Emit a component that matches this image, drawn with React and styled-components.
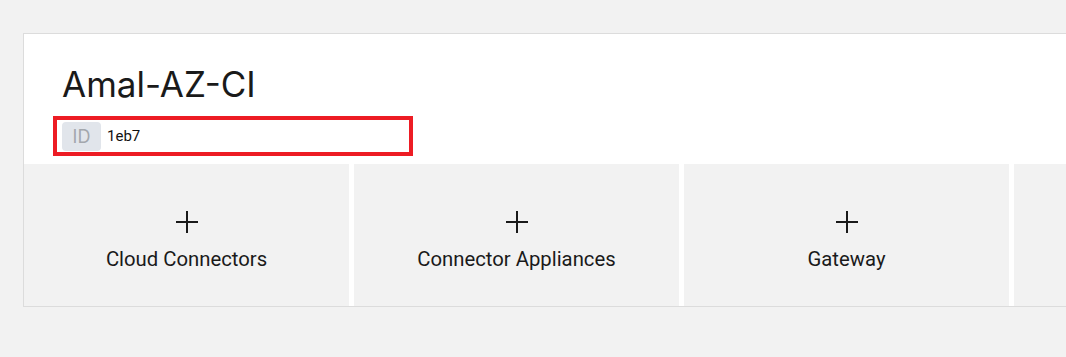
import React from "react";
import styled, { createGlobalStyle } from "styled-components";

const GlobalStyle = createGlobalStyle`
  html, body {
    margin: 0;
    padding: 0;
    background: #f2f2f2;
    overflow: hidden;
    font-family: Roboto, "Liberation Sans", sans-serif;
  }
`;

const Page = styled.div`
  width: 1066px;
  height: 357px;
  overflow: hidden;
  padding: 33px 0 0 23px;
  box-sizing: border-box;
`;

const Card = styled.section`
  width: 1680px;
  background: #fff;
  border: 1px solid #dcdcdc;
`;

const Header = styled.div`
  padding: 28px 0 8px 29px;
`;

const Title = styled.h1`
  margin: 0 0 0 9px;
  font-family: Inter, "Noto Sans", sans-serif;
  font-weight: 400;
  font-size: 35px;
  line-height: 44px;
  color: #1a1a1a;
`;

const IdBox = styled.div`
  display: flex;
  align-items: center;
  gap: 6px;
  width: 342px;
  height: 32px;
  margin-top: 10px;
  padding: 0 5px;
  border: 4px solid #ed1c24;
`;

const IdBadge = styled.span`
  display: inline-flex;
  align-items: center;
  justify-content: center;
  width: 39px;
  height: 29px;
  border-radius: 4px;
  background: #e1e5eb;
  color: #a3a7ad;
  font-family: Inter, "Noto Sans", sans-serif;
  font-size: 18px;
`;

const IdValue = styled.span`
  display: inline-block;
  width: 33px;
  overflow: hidden;
  white-space: nowrap;
  font-size: 15px;
  color: #111;
`;

const Tiles = styled.div`
  display: flex;
  gap: 5px;
`;

const Tile = styled.button`
  flex: 0 0 325px;
  height: 142px;
  border: 0;
  padding: 10px 0 0;
  background: #f2f2f2;
  display: flex;
  flex-direction: column;
  align-items: center;
  justify-content: center;
  gap: 13px;
  font-family: Roboto, "Liberation Sans", sans-serif;
  font-size: 20.3px;
  color: #1a1a1a;
  cursor: pointer;
`;

const Plus = () => (
  <svg width="24" height="24" viewBox="0 0 24 24">
    <path d="M12 1v22M1 12h22" stroke="#1a1a1a" strokeWidth="2" fill="none" />
  </svg>
);

const items = [
  "Cloud Connectors",
  "Connector Appliances",
  "Gateway",
  "Identity Providers",
  "Sites",
];

export default function App() {
  return (
    <Page>
      <GlobalStyle />
      <Card>
        <Header>
          <Title>Amal-AZ-CI</Title>
          <IdBox>
            <IdBadge>ID</IdBadge>
            <IdValue>1eb7</IdValue>
          </IdBox>
        </Header>
        <Tiles>
          {items.map((label) => (
            <Tile key={label}>
              <Plus />
              <span>{label}</span>
            </Tile>
          ))}
        </Tiles>
      </Card>
    </Page>
  );
}
